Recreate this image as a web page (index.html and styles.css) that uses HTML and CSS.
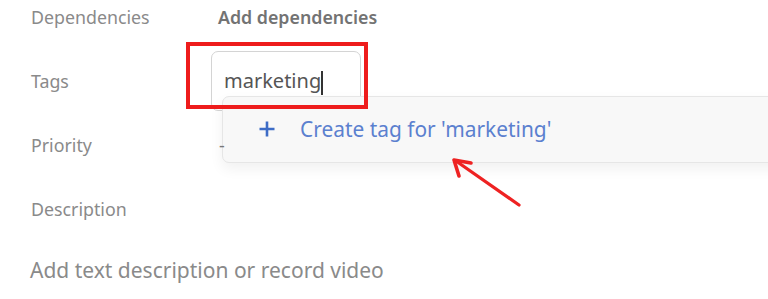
FILE: index.html
```html
<!DOCTYPE html>
<html lang="en">
<head>
  <meta charset="UTF-8">
  <title>Task fields</title>
  <meta name="viewport" content="width=device-width, initial-scale=1.0">
  <link rel="stylesheet" href="styles.css">
</head>
<body>
  <div class="fields">
    <div class="row">
      <div class="label">Dependencies</div>
      <div class="value strong">Add dependencies</div>
    </div>

    <div class="row">
      <div class="label">Tags</div>
      <div class="value">
        <div class="tag-input">
          <span class="typed">marketing</span><span class="caret"></span>
        </div>
        <div class="tag-menu">
          <div class="tag-option">
            <svg class="plus" width="18" height="18" viewBox="0 0 18 18">
              <path d="M9 1.5v15M1.5 9h15" stroke="#3d6cc6" stroke-width="2.6" stroke-linecap="butt" fill="none"/>
            </svg>
            <span>Create tag for 'marketing'</span>
          </div>
        </div>
        <div class="highlight"></div>
      </div>
    </div>

    <div class="row">
      <div class="label">Priority</div>
      <div class="value dash">-</div>
    </div>

    <div class="row">
      <div class="label">Description</div>
      <div class="value"></div>
    </div>

    <div class="placeholder">Add text description or record video</div>
  </div>

  <!-- annotation arrow -->
  <svg class="arrow" width="80" height="56" viewBox="0 0 80 56">
    <path d="M70 48 L7 4" stroke="#ee2222" stroke-width="3.2" stroke-linecap="round" fill="none"/>
    <path d="M5 3 L22 6 M5 3 L10 19" stroke="#ee2222" stroke-width="3.6" stroke-linecap="round" fill="none"/>
  </svg>
</body>
</html>
```

FILE: styles.css
```css
body {
  margin: 0;
  background: #fff;
  font-family: "Noto Sans", "Open Sans", sans-serif;
  color: #888;
  overflow: hidden;
}
.fields {
  margin-top: -15px;
  padding-left: 31px;
}
.row {
  display: flex;
  align-items: center;
  height: 64px;
}
.label {
  width: 187px;
  font-size: 17.8px;
  color: #8a8a8a;
}
.value {
  position: relative;
  flex: 1;
  font-size: 17.8px;
}
.strong {
  font-weight: 600;
  color: #737373;
}
.dash {
  color: #777;
  padding-left: 1px;
}
.tag-input {
  display: flex;
  align-items: center;
  box-sizing: border-box;
  width: 150px;
  height: 60px;
  margin-left: -7px;
  padding-left: 12px;
  border: 1px solid #d4d4d4;
  border-radius: 7px;
  background: #fff;
}
.typed {
  font-size: 20px;
  color: #555;
  margin-top: -2px;
}
.caret {
  width: 1.5px;
  height: 24px;
  background: #333;
  margin-top: 4px;
}
.tag-menu {
  position: absolute;
  left: 4px;
  top: 45px;
  right: -20px;
  height: 67px;
  box-sizing: border-box;
  background: #f8f8f8;
  border: 1px solid #e6e6e6;
  border-radius: 7px;
  box-shadow: 0 6px 14px rgba(0, 0, 0, 0.06);
  display: flex;
  align-items: center;
}
.tag-option {
  display: flex;
  align-items: center;
  gap: 24px;
  padding-left: 35px;
  font-size: 20.9px;
  color: #5b80cf;
  margin-top: -1px;
}
.highlight {
  position: absolute;
  left: -32px;
  top: -9px;
  width: 182px;
  height: 67px;
  box-sizing: border-box;
  border: 4px solid #ee1c1c;
}
.placeholder {
  font-size: 21px;
  color: #8a8a8a;
  margin-top: 15px;
  margin-left: -1px;
}
.arrow {
  position: absolute;
  left: 449px;
  top: 157px;
}
```
